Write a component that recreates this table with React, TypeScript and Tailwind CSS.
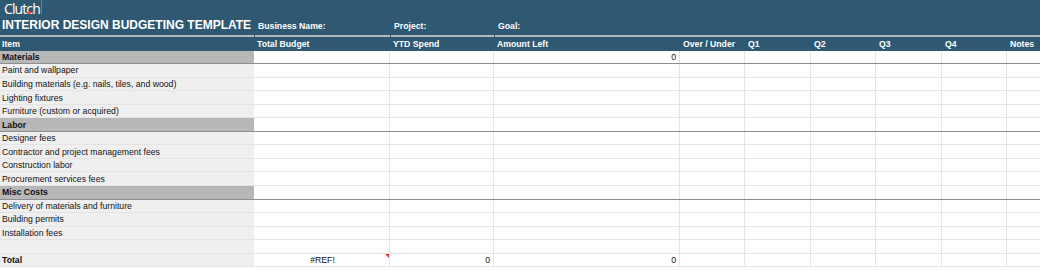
import React from 'react';

const gridCols = 'grid grid-cols-[254px_136px_104px_186px_65px_66px_65px_66px_65px_33px]';

const headers = ['Item', 'Total Budget', 'YTD Spend', 'Amount Left', 'Over / Under', 'Q1', 'Q2', 'Q3', 'Q4', 'Notes'];

type Row = { label: string; section?: boolean; total?: boolean; amountLeft?: string };

const rows: Row[] = [
  { label: 'Materials', section: true, amountLeft: '0' },
  { label: 'Paint and wallpaper' },
  { label: 'Building materials (e.g. nails, tiles, and wood)' },
  { label: 'Lighting fixtures' },
  { label: 'Furniture (custom or acquired)' },
  { label: 'Labor', section: true },
  { label: 'Designer fees' },
  { label: 'Contractor and project management fees' },
  { label: 'Construction labor' },
  { label: 'Procurement services fees' },
  { label: 'Misc Costs', section: true },
  { label: 'Delivery of materials and furniture' },
  { label: 'Building permits' },
  { label: 'Installation fees' },
  { label: '' },
  { label: 'Total', total: true },
];

function SheetRow({ row }: { row: Row }) {
  const rowBorder = row.section ? 'border-b border-[#8e8e8e]' : 'border-b border-[#e4e4e4]';
  return (
    <div className={`${gridCols} h-[13.55px] ${rowBorder} text-[8.7px] leading-none text-[#111]`}>
      <div
        className={`flex items-center pl-[2px] pt-px ${
          row.section ? 'bg-[#b7b7b7] font-bold' : 'bg-[#efefef]'
        } ${row.total ? 'font-bold' : ''}`}
      >
        {row.label}
      </div>
      {/* Total Budget */}
      <div className="relative flex items-center justify-center pt-px border-r border-[#e4e4e4]">
        {row.total && (
          <>
            <span className="pl-[2px]">#REF!</span>
            <span className="absolute right-0 top-0 h-0 w-0 border-l-[4px] border-t-[4px] border-l-transparent border-t-[#e53935]" />
          </>
        )}
      </div>
      {/* YTD Spend */}
      <div className="flex items-center justify-end pr-[3px] pt-px border-r border-[#e4e4e4]">{row.total ? '0' : ''}</div>
      {/* Amount Left */}
      <div className="flex items-center justify-end pr-[3px] pt-px border-r border-[#e4e4e4]">
        {row.total ? '0' : row.amountLeft ?? ''}
      </div>
      {[0, 1, 2, 3, 4].map((i) => (
        <div key={i} className="border-r border-[#e4e4e4]" />
      ))}
      <div />
    </div>
  );
}

export default function App() {
  return (
    <div className="w-[1040px] h-[270px] overflow-hidden bg-white font-['Liberation_Sans',Arial,sans-serif]">
      {/* top band */}
      <div className="bg-[#2f5972]">
        <div className={`${gridCols} h-[18px]`}>
          <div className="flex items-end pl-[4px] pb-[2px]">
            <span className="font-['Open_Sans',sans-serif] text-[14px] leading-none tracking-[-0.9px] text-white">
              Clut
              <span className="relative inline-block">
                c
                <span className="absolute left-[2px] top-[9px] block h-[3px] w-[3px] rounded-full bg-[#ff3d2e]" />
              </span>
              h
            </span>
            <span className="ml-[1px] mb-[2px] h-[14px] w-px bg-white/25" />
          </div>
          {[0, 1, 2, 3, 4, 5, 6, 7, 8].map((i) => (
            <div key={i} className="border-l border-[#2d566e]" />
          ))}
        </div>
        <div className={`${gridCols} h-[17px] items-baseline text-white font-bold`}>
          <div className="pl-[2px] text-[12px] leading-[15px] whitespace-nowrap">INTERIOR DESIGN BUDGETING TEMPLATE</div>
          <div className="h-full pl-[3px] text-[8.7px] border-l border-[#2d566e]">Business Name:</div>
          <div className="h-full pl-[3px] text-[8.7px] border-l border-[#2d566e]">Project:</div>
          <div className="h-full pl-[3px] text-[8.7px] border-l border-[#2d566e]">Goal:</div>
          {[0, 1, 2, 3, 4, 5].map((i) => (
            <div key={i} className="h-full border-l border-[#2d566e]" />
          ))}
        </div>
      </div>
      <div className="h-[2px] bg-[#b8b8b8]" />
      {/* column headers */}
      <div className={`${gridCols} h-[13.5px] bg-[#2f5972] text-[8.7px] font-bold text-white`}>
        {headers.map((h, i) => (
          <div key={h} className={`flex items-center pt-px ${i === 0 ? 'pl-[2px]' : 'pl-[3px]'}`}>
            {h}
          </div>
        ))}
      </div>
      {rows.map((r, i) => (
        <SheetRow key={i} row={r} />
      ))}
    </div>
  );
}
